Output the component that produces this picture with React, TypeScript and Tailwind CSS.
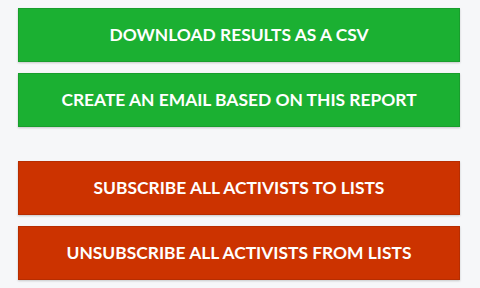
export default function App() {
  const btn =
    "h-[54px] w-full flex items-center justify-center text-white font-bold text-[17.4px] uppercase border border-black/10 shadow-[0_1px_2px_rgba(0,0,0,0.2)]";
  return (
    <div
      className="w-[480px] h-[288px] bg-[#f6f7f9] pl-[18px] pr-[20px] pt-[8px] flex flex-col"
      style={{ fontFamily: "Lato, 'Liberation Sans', sans-serif" }}
    >
      <div className={`${btn} bg-[#1bb032]`}>Download results as a CSV</div>
      <div className={`${btn} bg-[#1bb032] mt-[11px]`}>Create an email based on this report</div>
      <div className={`${btn} bg-[#cc3300] mt-[34px]`}>Subscribe all activists to lists</div>
      <div className={`${btn} bg-[#cc3300] mt-[11px]`}>Unsubscribe all activists from lists</div>
    </div>
  );
}
